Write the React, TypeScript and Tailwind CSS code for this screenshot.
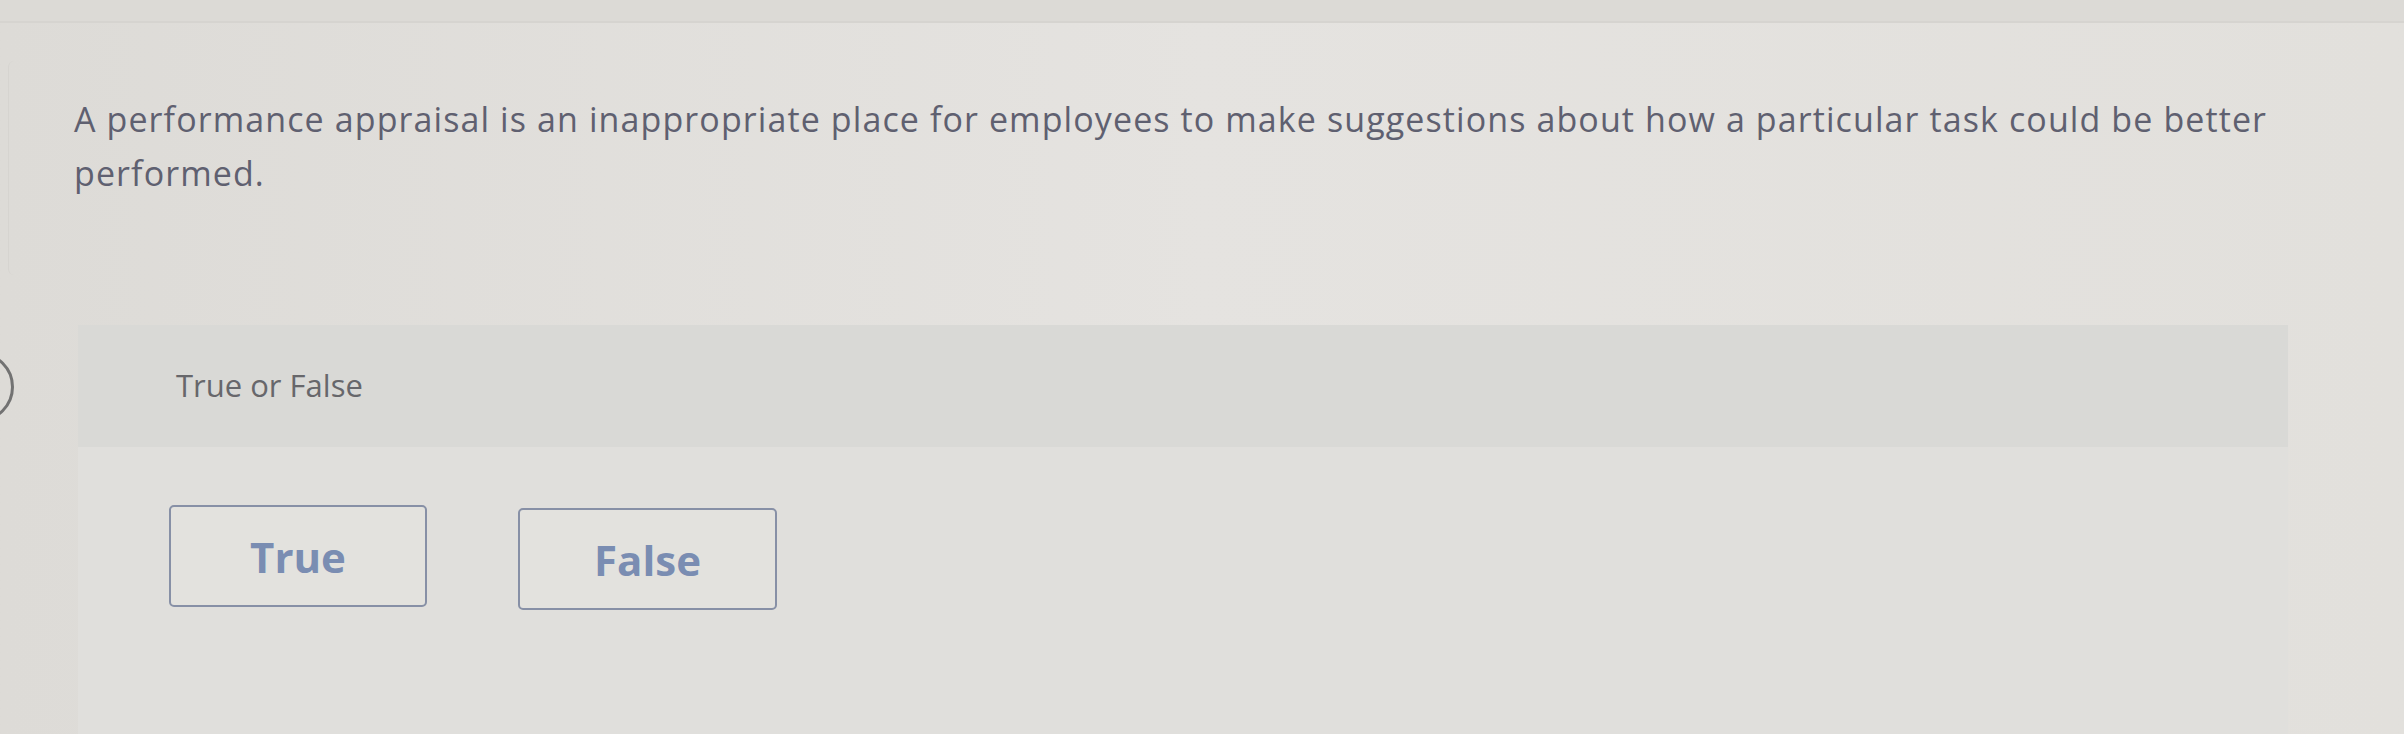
export default function App() {
  return (
    <div
      className="relative h-[734px] w-full overflow-hidden bg-linear-to-r from-[#dddbd7] via-[#e5e3e0] to-[#e2e0dc]"
      style={{ fontFamily: "'Open Sans', Lato, sans-serif" }}
    >
      {/* top bar */}
      <div className="h-[23px] border-b-2 border-[#d6d4d0] bg-[#dcdad6]" />

      {/* question card */}
      <div className="ml-[8px] mt-[38px] h-[214px] rounded-l-[6px] border-l border-[#d6d4d0] pl-[65px] pt-[31px]">
        <p className="w-[2240px] text-[34px] leading-[54px] tracking-[1.1px] text-[#5f6070]">
          A performance appraisal is an inappropriate place for employees to make suggestions about how a particular task could be better performed.
        </p>
      </div>

      {/* side nav circle */}
      <div className="absolute left-[-56px] top-[352px] h-[70px] w-[70px] rounded-full border-[3px] border-[#727272]" />

      {/* answer panel */}
      <div className="ml-[78px] mt-[50px] h-[420px] w-[2210px] bg-[#e0dfdc]">
        <div className="h-[122px] bg-[#d9d9d6] pl-[98px] pt-[40px]">
          <div className="text-[31px] leading-[40px] text-[#67676b]">True or False</div>
        </div>
        <div className="flex items-start gap-[91px] pl-[91px] pt-[58px]">
          <button className="flex h-[102px] w-[258px] items-center justify-center rounded-[5px] border-2 border-[#8790a6] bg-[#e3e2de] text-[42px] font-bold text-[#7a8db2]">
            True
          </button>
          <button className="mt-[3px] flex h-[102px] w-[259px] items-center justify-center rounded-[5px] border-2 border-[#8790a6] bg-[#e3e2de] text-[42px] font-bold text-[#7a8db2]">
            False
          </button>
        </div>
      </div>
    </div>
  );
}
